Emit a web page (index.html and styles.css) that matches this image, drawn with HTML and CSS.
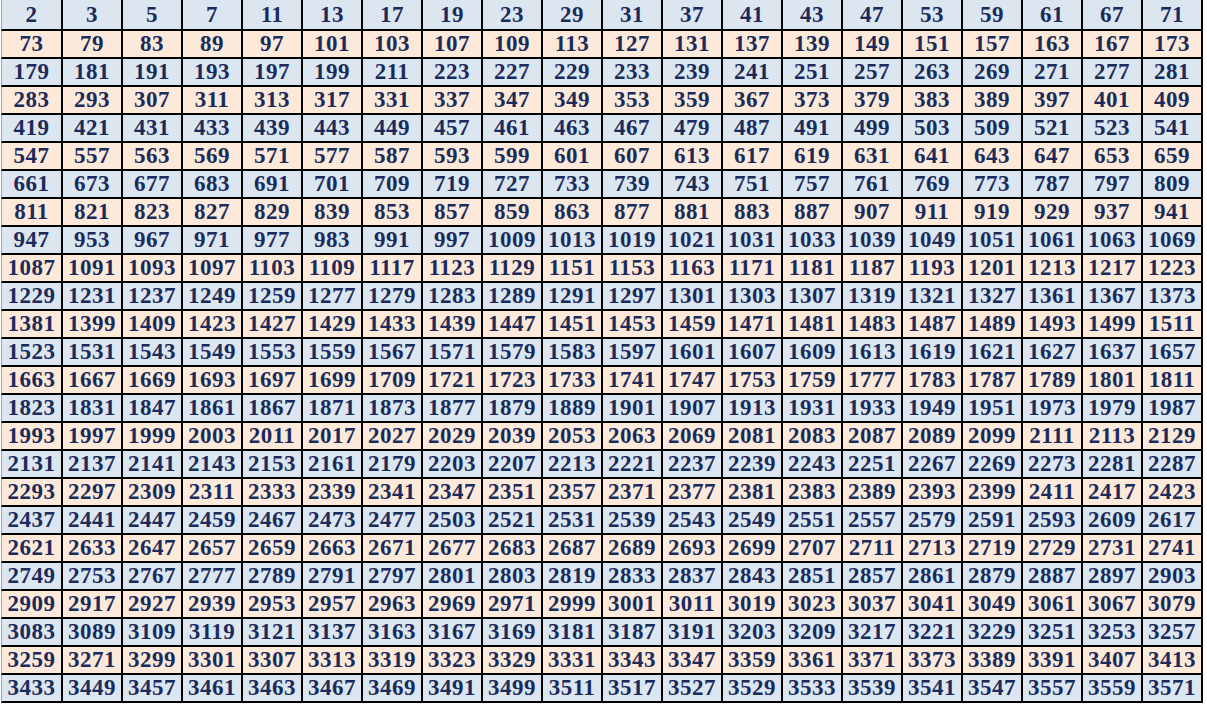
FILE: index.html
```html
<!DOCTYPE html>
<html>
<head>
<meta charset="utf-8">
<title>Primes</title>
<link rel="stylesheet" href="styles.css">
</head>
<body>
<table class="primes">
<tr class="first"><td>2</td><td>3</td><td>5</td><td>7</td><td>11</td><td>13</td><td>17</td><td>19</td><td>23</td><td>29</td><td>31</td><td>37</td><td>41</td><td>43</td><td>47</td><td>53</td><td>59</td><td>61</td><td>67</td><td>71</td></tr>
<tr><td>73</td><td>79</td><td>83</td><td>89</td><td>97</td><td>101</td><td>103</td><td>107</td><td>109</td><td>113</td><td>127</td><td>131</td><td>137</td><td>139</td><td>149</td><td>151</td><td>157</td><td>163</td><td>167</td><td>173</td></tr>
<tr><td>179</td><td>181</td><td>191</td><td>193</td><td>197</td><td>199</td><td>211</td><td>223</td><td>227</td><td>229</td><td>233</td><td>239</td><td>241</td><td>251</td><td>257</td><td>263</td><td>269</td><td>271</td><td>277</td><td>281</td></tr>
<tr><td>283</td><td>293</td><td>307</td><td>311</td><td>313</td><td>317</td><td>331</td><td>337</td><td>347</td><td>349</td><td>353</td><td>359</td><td>367</td><td>373</td><td>379</td><td>383</td><td>389</td><td>397</td><td>401</td><td>409</td></tr>
<tr><td>419</td><td>421</td><td>431</td><td>433</td><td>439</td><td>443</td><td>449</td><td>457</td><td>461</td><td>463</td><td>467</td><td>479</td><td>487</td><td>491</td><td>499</td><td>503</td><td>509</td><td>521</td><td>523</td><td>541</td></tr>
<tr><td>547</td><td>557</td><td>563</td><td>569</td><td>571</td><td>577</td><td>587</td><td>593</td><td>599</td><td>601</td><td>607</td><td>613</td><td>617</td><td>619</td><td>631</td><td>641</td><td>643</td><td>647</td><td>653</td><td>659</td></tr>
<tr><td>661</td><td>673</td><td>677</td><td>683</td><td>691</td><td>701</td><td>709</td><td>719</td><td>727</td><td>733</td><td>739</td><td>743</td><td>751</td><td>757</td><td>761</td><td>769</td><td>773</td><td>787</td><td>797</td><td>809</td></tr>
<tr><td>811</td><td>821</td><td>823</td><td>827</td><td>829</td><td>839</td><td>853</td><td>857</td><td>859</td><td>863</td><td>877</td><td>881</td><td>883</td><td>887</td><td>907</td><td>911</td><td>919</td><td>929</td><td>937</td><td>941</td></tr>
<tr><td>947</td><td>953</td><td>967</td><td>971</td><td>977</td><td>983</td><td>991</td><td>997</td><td>1009</td><td>1013</td><td>1019</td><td>1021</td><td>1031</td><td>1033</td><td>1039</td><td>1049</td><td>1051</td><td>1061</td><td>1063</td><td>1069</td></tr>
<tr><td>1087</td><td>1091</td><td>1093</td><td>1097</td><td>1103</td><td>1109</td><td>1117</td><td>1123</td><td>1129</td><td>1151</td><td>1153</td><td>1163</td><td>1171</td><td>1181</td><td>1187</td><td>1193</td><td>1201</td><td>1213</td><td>1217</td><td>1223</td></tr>
<tr><td>1229</td><td>1231</td><td>1237</td><td>1249</td><td>1259</td><td>1277</td><td>1279</td><td>1283</td><td>1289</td><td>1291</td><td>1297</td><td>1301</td><td>1303</td><td>1307</td><td>1319</td><td>1321</td><td>1327</td><td>1361</td><td>1367</td><td>1373</td></tr>
<tr><td>1381</td><td>1399</td><td>1409</td><td>1423</td><td>1427</td><td>1429</td><td>1433</td><td>1439</td><td>1447</td><td>1451</td><td>1453</td><td>1459</td><td>1471</td><td>1481</td><td>1483</td><td>1487</td><td>1489</td><td>1493</td><td>1499</td><td>1511</td></tr>
<tr><td>1523</td><td>1531</td><td>1543</td><td>1549</td><td>1553</td><td>1559</td><td>1567</td><td>1571</td><td>1579</td><td>1583</td><td>1597</td><td>1601</td><td>1607</td><td>1609</td><td>1613</td><td>1619</td><td>1621</td><td>1627</td><td>1637</td><td>1657</td></tr>
<tr><td>1663</td><td>1667</td><td>1669</td><td>1693</td><td>1697</td><td>1699</td><td>1709</td><td>1721</td><td>1723</td><td>1733</td><td>1741</td><td>1747</td><td>1753</td><td>1759</td><td>1777</td><td>1783</td><td>1787</td><td>1789</td><td>1801</td><td>1811</td></tr>
<tr><td>1823</td><td>1831</td><td>1847</td><td>1861</td><td>1867</td><td>1871</td><td>1873</td><td>1877</td><td>1879</td><td>1889</td><td>1901</td><td>1907</td><td>1913</td><td>1931</td><td>1933</td><td>1949</td><td>1951</td><td>1973</td><td>1979</td><td>1987</td></tr>
<tr><td>1993</td><td>1997</td><td>1999</td><td>2003</td><td>2011</td><td>2017</td><td>2027</td><td>2029</td><td>2039</td><td>2053</td><td>2063</td><td>2069</td><td>2081</td><td>2083</td><td>2087</td><td>2089</td><td>2099</td><td>2111</td><td>2113</td><td>2129</td></tr>
<tr><td>2131</td><td>2137</td><td>2141</td><td>2143</td><td>2153</td><td>2161</td><td>2179</td><td>2203</td><td>2207</td><td>2213</td><td>2221</td><td>2237</td><td>2239</td><td>2243</td><td>2251</td><td>2267</td><td>2269</td><td>2273</td><td>2281</td><td>2287</td></tr>
<tr><td>2293</td><td>2297</td><td>2309</td><td>2311</td><td>2333</td><td>2339</td><td>2341</td><td>2347</td><td>2351</td><td>2357</td><td>2371</td><td>2377</td><td>2381</td><td>2383</td><td>2389</td><td>2393</td><td>2399</td><td>2411</td><td>2417</td><td>2423</td></tr>
<tr><td>2437</td><td>2441</td><td>2447</td><td>2459</td><td>2467</td><td>2473</td><td>2477</td><td>2503</td><td>2521</td><td>2531</td><td>2539</td><td>2543</td><td>2549</td><td>2551</td><td>2557</td><td>2579</td><td>2591</td><td>2593</td><td>2609</td><td>2617</td></tr>
<tr><td>2621</td><td>2633</td><td>2647</td><td>2657</td><td>2659</td><td>2663</td><td>2671</td><td>2677</td><td>2683</td><td>2687</td><td>2689</td><td>2693</td><td>2699</td><td>2707</td><td>2711</td><td>2713</td><td>2719</td><td>2729</td><td>2731</td><td>2741</td></tr>
<tr><td>2749</td><td>2753</td><td>2767</td><td>2777</td><td>2789</td><td>2791</td><td>2797</td><td>2801</td><td>2803</td><td>2819</td><td>2833</td><td>2837</td><td>2843</td><td>2851</td><td>2857</td><td>2861</td><td>2879</td><td>2887</td><td>2897</td><td>2903</td></tr>
<tr><td>2909</td><td>2917</td><td>2927</td><td>2939</td><td>2953</td><td>2957</td><td>2963</td><td>2969</td><td>2971</td><td>2999</td><td>3001</td><td>3011</td><td>3019</td><td>3023</td><td>3037</td><td>3041</td><td>3049</td><td>3061</td><td>3067</td><td>3079</td></tr>
<tr><td>3083</td><td>3089</td><td>3109</td><td>3119</td><td>3121</td><td>3137</td><td>3163</td><td>3167</td><td>3169</td><td>3181</td><td>3187</td><td>3191</td><td>3203</td><td>3209</td><td>3217</td><td>3221</td><td>3229</td><td>3251</td><td>3253</td><td>3257</td></tr>
<tr><td>3259</td><td>3271</td><td>3299</td><td>3301</td><td>3307</td><td>3313</td><td>3319</td><td>3323</td><td>3329</td><td>3331</td><td>3343</td><td>3347</td><td>3359</td><td>3361</td><td>3371</td><td>3373</td><td>3389</td><td>3391</td><td>3407</td><td>3413</td></tr>
<tr><td>3433</td><td>3449</td><td>3457</td><td>3461</td><td>3463</td><td>3467</td><td>3469</td><td>3491</td><td>3499</td><td>3511</td><td>3517</td><td>3527</td><td>3529</td><td>3533</td><td>3539</td><td>3541</td><td>3547</td><td>3557</td><td>3559</td><td>3571</td></tr>
</table>
</body>
</html>
```

FILE: styles.css
```css
html, body {
  margin: 0;
  padding: 0;
  background: #ffffff;
}

.primes {
  border-collapse: separate;
  border-spacing: 0;
  table-layout: fixed;
  margin-left: 1px;
  font-family: "Liberation Serif", "Times New Roman", serif;
  font-weight: bold;
  font-size: 23px;
  letter-spacing: 0.5px;
  color: #1a2b5b;
}

.primes td {
  width: 58px;
  height: 26px;
  padding: 0;
  box-sizing: content-box;
  text-align: center;
  vertical-align: middle;
  line-height: 26px;
  border-right: 2px solid #000000;
  border-bottom: 2px solid #000000;
  white-space: nowrap;
  overflow: hidden;
}

.primes td:first-child {
  width: 59px;
  border-left: 1px solid #a6a6a6;
}

.primes .first td {
  height: 29px;
  line-height: 29px;
}

.primes tr:nth-child(odd) td {
  background: #dce6f1;
}

.primes tr:nth-child(even) td {
  background: #fde9d9;
}
```
